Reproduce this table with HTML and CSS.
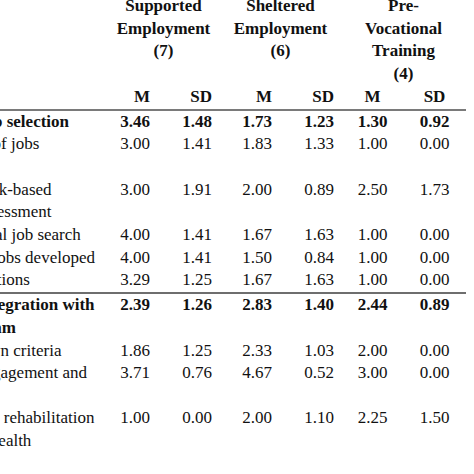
FILE: index.html
```html
<!DOCTYPE html>
<html lang="en">
<head>
<meta charset="utf-8">
<title>Fidelity scores by program type</title>
<link rel="stylesheet" href="styles.css">
</head>
<body>
<div class="crop">
  <table class="scores">
    <colgroup>
      <col class="c-label">
      <col class="c-n1">
      <col class="c-n">
      <col class="c-n3">
      <col class="c-n">
      <col class="c-n">
      <col class="c-n">
    </colgroup>
    <thead>
      <tr class="groups">
        <th class="label"></th>
        <th colspan="2">Supported<br>Employment<br>(7)</th>
        <th colspan="2">Sheltered<br>Employment<br>(6)</th>
        <th colspan="2">Pre-<br>Vocational<br>Training<br>(4)</th>
      </tr>
      <tr class="stats">
        <th class="label"></th>
        <th class="r">M</th>
        <th class="r">SD</th>
        <th class="r">M</th>
        <th class="r">SD</th>
        <th class="c">M</th>
        <th class="c">SD</th>
      </tr>
    </thead>
    <tbody>
      <tr class="cat">
        <td class="label">Job selection</td>
        <td class="r">3.46</td><td class="r">1.48</td><td class="r">1.73</td><td class="r">1.23</td><td class="c">1.30</td><td class="c">0.92</td>
      </tr>
      <tr>
        <td class="label">N of jobs<br>(n)</td>
        <td class="r">3.00</td><td class="r">1.41</td><td class="r">1.83</td><td class="r">1.33</td><td class="c">1.00</td><td class="c">0.00</td>
      </tr>
      <tr>
        <td class="label">Risk-based<br>assessment</td>
        <td class="r">3.00</td><td class="r">1.91</td><td class="r">2.00</td><td class="r">0.89</td><td class="c">2.50</td><td class="c">1.73</td>
      </tr>
      <tr>
        <td class="label">Real job search</td>
        <td class="r">4.00</td><td class="r">1.41</td><td class="r">1.67</td><td class="r">1.63</td><td class="c">1.00</td><td class="c">0.00</td>
      </tr>
      <tr>
        <td class="label">N jobs developed</td>
        <td class="r">4.00</td><td class="r">1.41</td><td class="r">1.50</td><td class="r">0.84</td><td class="c">1.00</td><td class="c">0.00</td>
      </tr>
      <tr>
        <td class="label">Options</td>
        <td class="r">3.29</td><td class="r">1.25</td><td class="r">1.67</td><td class="r">1.63</td><td class="c">1.00</td><td class="c">0.00</td>
      </tr>
      <tr class="cat section">
        <td class="label">Integration with<br>Team</td>
        <td class="r">2.39</td><td class="r">1.26</td><td class="r">2.83</td><td class="r">1.40</td><td class="c">2.44</td><td class="c">0.89</td>
      </tr>
      <tr>
        <td class="label">Own criteria</td>
        <td class="r">1.86</td><td class="r">1.25</td><td class="r">2.33</td><td class="r">1.03</td><td class="c">2.00</td><td class="c">0.00</td>
      </tr>
      <tr>
        <td class="label">engagement and<br>(x)</td>
        <td class="r">3.71</td><td class="r">0.76</td><td class="r">4.67</td><td class="r">0.52</td><td class="c">3.00</td><td class="c">0.00</td>
      </tr>
      <tr>
        <td class="label">Job rehabilitation<br>+ health</td>
        <td class="r">1.00</td><td class="r">0.00</td><td class="r">2.00</td><td class="r">1.10</td><td class="c">2.25</td><td class="c">1.50</td>
      </tr>
    </tbody>
  </table>
</div>
</body>
</html>
```
FILE: styles.css
```css
html, body {
  margin: 0;
  padding: 0;
  background: #ffffff;
}

.crop {
  width: 474px;
  height: 474px;
  overflow: hidden;
}

.scores {
  margin-left: -24px;
  margin-top: -5px;
  width: 489.5px;
  table-layout: fixed;
  border-collapse: separate;
  border-spacing: 0;
  font-family: "Liberation Serif", "Times New Roman", serif;
  font-size: 17px;
  line-height: 22.7px;
  color: #111111;
}

.c-label { width: 131.5px; }
.c-n1 { width: 50px; }
.c-n3 { width: 60px; }
.c-n { width: 62px; }

.scores th,
.scores td {
  padding: 0;
  white-space: nowrap;
  vertical-align: top;
  overflow: hidden;
}

.scores th {
  font-weight: bold;
  text-align: center;
}

.scores .label {
  text-align: left;
}

.scores .r {
  text-align: right;
  padding-right: 7.5px;
}

.scores .c {
  text-align: center;
}

.stats th {
  border-bottom: 2px solid #7a7a7a;
}

.cat td {
  font-weight: bold;
}

.section td {
  border-top: 2px solid #6e6e6e;
}

.section ~ tr td {
  line-height: 22.5px;
}
```
